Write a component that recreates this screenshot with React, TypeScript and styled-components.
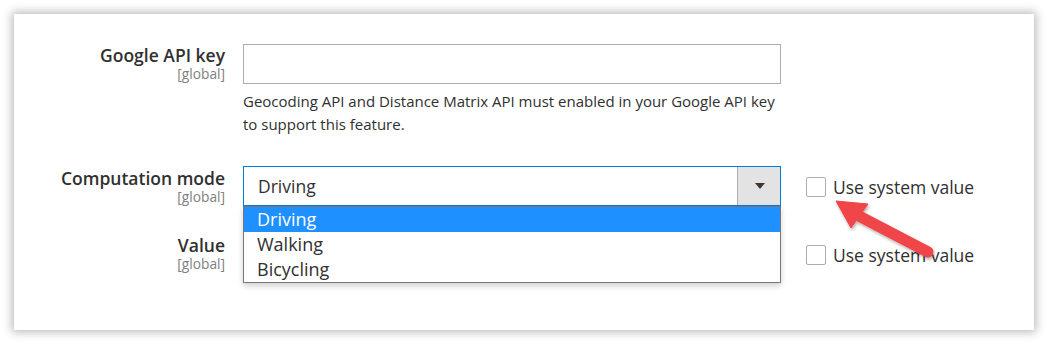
import React from "react";
import styled, { createGlobalStyle } from "styled-components";

const Global = createGlobalStyle`
  html, body { margin: 0; padding: 0; background: #ffffff; }
  body { font-family: "Open Sans", "Noto Sans", sans-serif; color: #303030; }
  * { box-sizing: border-box; }
`;

const Page = styled.div`
  padding: 14px;
  width: 1048px;
  height: 344px;
`;

const Card = styled.div`
  position: relative;
  width: 1020px;
  height: 316px;
  background: #ffffff;
  box-shadow: 0 0 9px 2px rgba(0, 0, 0, 0.28);
  padding-top: 30px;
  display: flex;
  flex-direction: column;
`;

const Row = styled.div<{ $gap?: number }>`
  display: grid;
  grid-template-columns: 229px 538px auto;
  align-items: start;
  margin-top: ${(p) => p.$gap ?? 0}px;
`;

const LabelCell = styled.div<{ $top?: number }>`
  padding-right: 18px;
  padding-top: ${(p) => p.$top ?? 0}px;
  text-align: right;
  display: flex;
  flex-direction: column;
  align-items: flex-end;
`;

const Title = styled.span`
  font-size: 17.5px;
  font-weight: 600;
  line-height: 22px;
  color: #303030;
  white-space: nowrap;
`;

const Scope = styled.span`
  font-size: 13.75px;
  line-height: 16px;
  color: #808080;
`;

const Control = styled.div`
  position: relative;
  display: flex;
  flex-direction: column;
`;

const TextInput = styled.div`
  height: 40px;
  border: 1px solid #adadad;
  background: #fff;
`;

const Note = styled.div`
  margin-top: 6px;
  font-size: 15px;
  line-height: 23px;
  color: #303030;
  white-space: nowrap;
`;

const SelectBox = styled.div<{ $focus?: boolean }>`
  height: 40px;
  border: 1px solid ${(p) => (p.$focus ? "#007bdb" : "#adadad")};
  background: #fff;
  display: flex;
  align-items: stretch;
`;

const SelectValue = styled.div`
  flex: 1;
  padding-left: 14px;
  display: flex;
  align-items: center;
  font-size: 17.5px;
  color: #303030;
`;

const SelectButton = styled.div`
  width: 43px;
  background: #e3e3e3;
  border-left: 1px solid #adadad;
  display: flex;
  align-items: center;
  justify-content: center;
`;

const Caret = styled.span`
  width: 0;
  height: 0;
  border-left: 5px solid transparent;
  border-right: 5px solid transparent;
  border-top: 6px solid #41362f;
  margin-left: 2px;
`;

const Dropdown = styled.ul`
  position: absolute;
  left: 0;
  top: 40px;
  width: 538px;
  margin: 0;
  padding: 0;
  list-style: none;
  background: #fff;
  border: 1px solid #767676;
  box-shadow: 0 3px 6px rgba(0, 0, 0, 0.18);
  z-index: 2;
`;

const Option = styled.li<{ $active?: boolean }>`
  height: 25px;
  line-height: 25px;
  padding-left: 13px;
  font-size: 18px;
  background: ${(p) => (p.$active ? "#1e90ff" : "transparent")};
  color: ${(p) => (p.$active ? "#ffffff" : "#303030")};
`;

const CheckCell = styled.label`
  height: 40px;
  padding-left: 25px;
  display: flex;
  align-items: center;
  gap: 7px;
  font-size: 17.5px;
  color: #303030;
  padding-top: 2px;
  white-space: nowrap;
`;

const Box = styled.span`
  width: 20px;
  height: 20px;
  border: 1px solid #adadad;
  border-radius: 2px;
  background: #fff;
  flex: none;
`;

const Annotation = styled.svg`
  position: absolute;
  left: 0;
  top: 0;
  width: 1020px;
  height: 316px;
  pointer-events: none;
  z-index: 3;
  overflow: visible;
`;

export default function App() {
  return (
    <>
      <Global />
      <Page>
        <Card>
          <Row>
            <LabelCell>
              <Title>Google API key</Title>
              <Scope>[global]</Scope>
            </LabelCell>
            <Control>
              <TextInput />
              <Note>
                Geocoding API and Distance Matrix API must enabled in your Google API key
                <br />
                to support this feature.
              </Note>
            </Control>
            <div />
          </Row>
          <Row $gap={30}>
            <LabelCell $top={1}>
              <Title>Computation mode</Title>
              <Scope>[global]</Scope>
            </LabelCell>
            <Control>
              <SelectBox $focus>
                <SelectValue>Driving</SelectValue>
                <SelectButton>
                  <Caret />
                </SelectButton>
              </SelectBox>
              <Dropdown>
                <Option $active>Driving</Option>
                <Option>Walking</Option>
                <Option>Bicycling</Option>
              </Dropdown>
            </Control>
            <CheckCell>
              <Box />
              Use system value
            </CheckCell>
          </Row>
          <Row $gap={28}>
            <LabelCell $top={0}>
              <Title>Value</Title>
              <Scope>[global]</Scope>
            </LabelCell>
            <Control>
              <SelectBox>
                <SelectValue />
              </SelectBox>
            </Control>
            <CheckCell>
              <Box />
              Use system value
            </CheckCell>
          </Row>
          <Annotation viewBox="0 0 1020 316">
            <defs>
              <filter id="arrowShadow" x="-20%" y="-20%" width="140%" height="140%">
                <feDropShadow dx="1" dy="2" stdDeviation="1.5" floodColor="#000" floodOpacity="0.3" />
              </filter>
            </defs>
            <g filter="url(#arrowShadow)" fill="#f04548" stroke="#f04548">
              <line x1="843" y1="201" x2="914" y2="238" strokeWidth="11" strokeLinecap="round" />
              <polygon points="822,187 837,214 854,190" strokeWidth="1" strokeLinejoin="round" />
            </g>
          </Annotation>
        </Card>
      </Page>
    </>
  );
}
